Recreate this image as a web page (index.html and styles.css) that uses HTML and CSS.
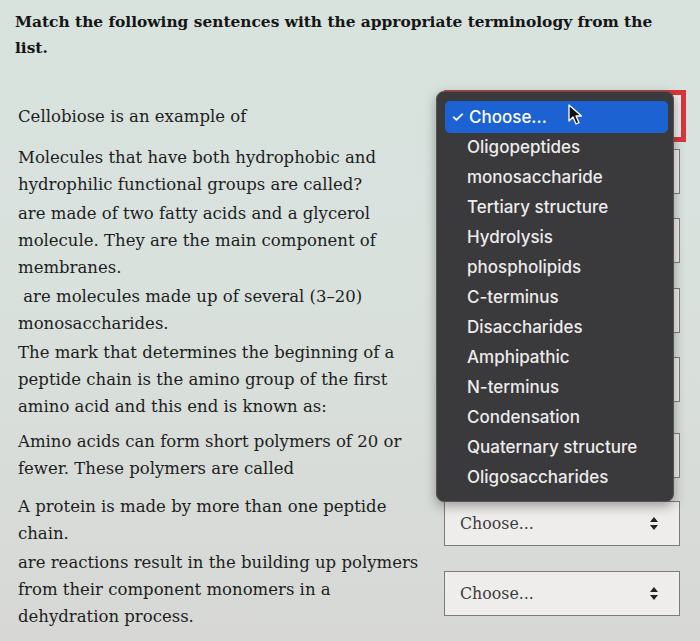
FILE: index.html
```html
<!DOCTYPE html>
<html lang="en">
<head>
  <meta charset="UTF-8">
  <title>Match the following sentences</title>
  <link rel="stylesheet" href="styles.css">
</head>
<body>

  <div class="quiz">
    <h1 class="title">Match the following sentences with the appropriate terminology from the list.</h1>

    <div class="question q1">
      <p class="prompt">Cellobiose is an example of</p>
      <div class="select focused">
        <span>Choose...</span>
        <svg class="arrows" width="8" height="13" viewBox="0 0 8 13"><path d="M4 0L8 5H0z M4 13L0 8h8z" fill="#222"/></svg>

        <ul class="menu">
          <li class="active"><span class="check">✓</span>Choose...</li>
          <li>Oligopeptides</li>
          <li>monosaccharide</li>
          <li>Tertiary structure</li>
          <li>Hydrolysis</li>
          <li>phospholipids</li>
          <li>C-terminus</li>
          <li>Disaccharides</li>
          <li>Amphipathic</li>
          <li>N-terminus</li>
          <li>Condensation</li>
          <li>Quaternary structure</li>
          <li>Oligosaccharides</li>
        </ul>

        <svg class="cursor" width="16" height="22" viewBox="0 0 16 22">
          <path d="M1 1v16l4-4 3 7 3-1.3-3-6.7h5.5z" fill="#111" stroke="#fff" stroke-width="1.3" stroke-linejoin="round"/>
        </svg>
      </div>
    </div>

    <div class="question">
      <p class="prompt">Molecules that have both hydrophobic and hydrophilic functional groups are called?</p>
      <div class="select"><span>Choose...</span><svg class="arrows" width="8" height="13" viewBox="0 0 8 13"><path d="M4 0L8 5H0z M4 13L0 8h8z" fill="#222"/></svg></div>
    </div>

    <div class="question">
      <p class="prompt">are made of two fatty acids and a glycerol molecule. They are the main component of membranes.</p>
      <div class="select"><span>Choose...</span><svg class="arrows" width="8" height="13" viewBox="0 0 8 13"><path d="M4 0L8 5H0z M4 13L0 8h8z" fill="#222"/></svg></div>
    </div>

    <div class="question">
      <p class="prompt">&nbsp;are molecules made up of several (3–20) monosaccharides.</p>
      <div class="select"><span>Choose...</span><svg class="arrows" width="8" height="13" viewBox="0 0 8 13"><path d="M4 0L8 5H0z M4 13L0 8h8z" fill="#222"/></svg></div>
    </div>

    <div class="question">
      <p class="prompt">The mark that determines the beginning of a peptide chain is the amino group of the first amino acid and this end is known as:</p>
      <div class="select"><span>Choose...</span><svg class="arrows" width="8" height="13" viewBox="0 0 8 13"><path d="M4 0L8 5H0z M4 13L0 8h8z" fill="#222"/></svg></div>
    </div>

    <div class="question q6">
      <p class="prompt">Amino acids can form short polymers of 20 or fewer. These polymers are called</p>
      <div class="select"><span>Choose...</span><svg class="arrows" width="8" height="13" viewBox="0 0 8 13"><path d="M4 0L8 5H0z M4 13L0 8h8z" fill="#222"/></svg></div>
    </div>

    <div class="question q7 low">
      <p class="prompt">A protein is made by more than one peptide chain.</p>
      <div class="select"><span>Choose...</span><svg class="arrows" width="8" height="13" viewBox="0 0 8 13"><path d="M4 0L8 5H0z M4 13L0 8h8z" fill="#222"/></svg></div>
    </div>

    <div class="question low">
      <p class="prompt">are reactions result in the building up polymers from their component monomers in a dehydration process.</p>
      <div class="select"><span>Choose...</span><svg class="arrows" width="8" height="13" viewBox="0 0 8 13"><path d="M4 0L8 5H0z M4 13L0 8h8z" fill="#222"/></svg></div>
    </div>
  </div>

</body>
</html>
```

FILE: styles.css
```css
body {
  margin: 0;
  height: 641px;
  overflow: hidden;
  background: linear-gradient(180deg, #d8e3de 0%, #d9e1dd 45%, #d7d8d5 100%);
  font-family: "DejaVu Serif", serif;
  color: #1d1d1d;
}

.quiz {
  padding: 9px 20px 0 18px;
}

.title {
  max-width: 650px;
  margin: 0 0 29px -3px;
  font-size: 15.4px;
  line-height: 26px;
  font-weight: bold;
  color: #151515;
}

.question {
  display: flex;
  align-items: center;
  justify-content: space-between;
  margin-top: 2px;
}

.q1 {
  margin-top: 0;
}

.q6 {
  margin-top: 8px;
}

.q7 {
  margin-top: 11px;
}

.low .select {
  margin-top: 7px;
}

.prompt {
  margin: 0;
  width: 410px;
  font-size: 16.5px;
  line-height: 27px;
}

.select {
  position: relative;
  box-sizing: border-box;
  width: 236px;
  height: 45px;
  display: flex;
  align-items: center;
  justify-content: space-between;
  padding: 0 21px 0 15px;
  background: #efedeb;
  border: 1px solid #7c7c7c;
  font-size: 15.8px;
  color: #3b3b3b;
}

.select.focused {
  height: 52px;
  border: 5px solid #d8363a;
  width: 242px;
  margin-right: -6px;
}

.arrows {
  display: block;
}

/* open native dropdown, drawn over the form */
.menu {
  position: absolute;
  top: -4px;
  left: -13px;
  width: 236px;
  margin: 0;
  padding: 9px 0 9px;
  list-style: none;
  background: #3a393b;
  border: 1px solid #555;
  border-radius: 8px;
  box-shadow: 0 4px 12px rgba(0, 0, 0, 0.35);
  font-family: Inter, "Noto Sans", sans-serif;
  font-size: 17px;
  font-weight: 500;
  color: #ececec;
  z-index: 2;
}

.menu li {
  height: 30px;
  line-height: 30px;
  padding-left: 22px;
  margin: 0 5px 0 8px;
  white-space: nowrap;
}

.menu li.active {
  position: relative;
  height: 32px;
  line-height: 32px;
  margin-bottom: -1px;
  background: #1c62d2;
  border-radius: 5px;
  padding-left: 24px;
  color: #fff;
}

.check {
  position: absolute;
  left: 6px;
  font-size: 15px;
}

.cursor {
  position: absolute;
  top: 9px;
  left: 119px;
  z-index: 3;
}
```
